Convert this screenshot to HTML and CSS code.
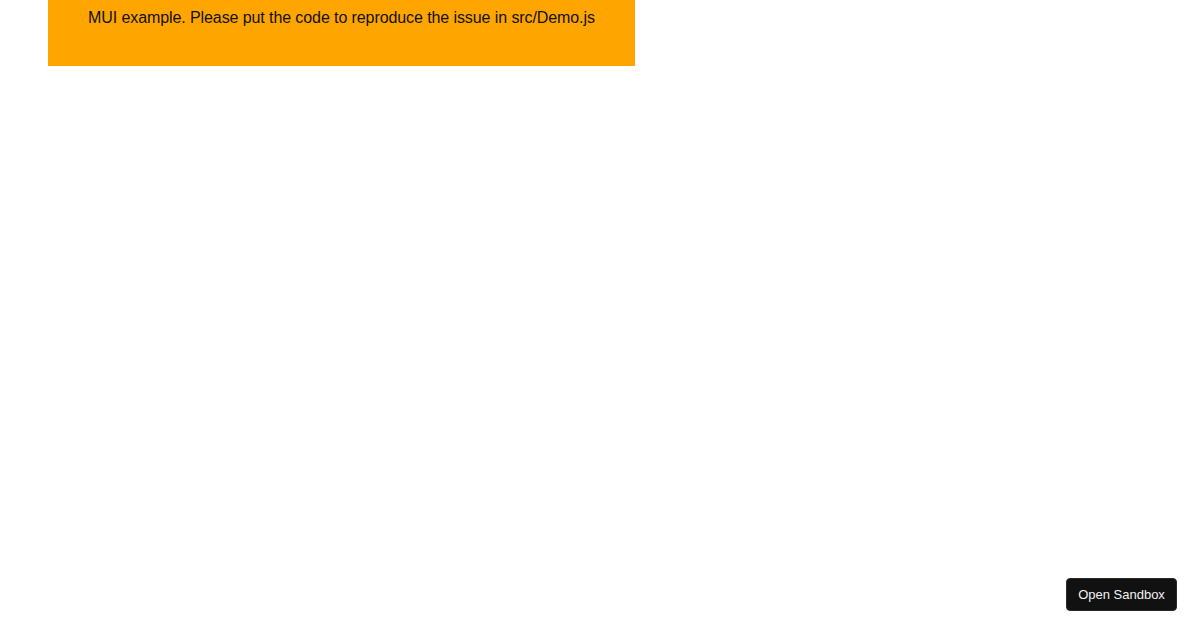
FILE: index.html
```html
<!DOCTYPE html>
<html>
<head>
<meta charset="utf-8">
<link rel="stylesheet" href="styles.css">
</head>
<body>
<div class="banner">MUI example. Please put the code to reproduce the issue in src/Demo.js</div>
<button class="sandbox">Open Sandbox</button>
</body>
</html>
```
FILE: styles.css
```css
html, body {
  margin: 0;
  padding: 0;
  background: #fff;
  font-family: "Liberation Sans", Arial, sans-serif;
}
.banner {
  box-sizing: border-box;
  margin-left: 48px;
  width: 587px;
  height: 66px;
  padding: 9px 30px 0 40px;
  background: #ffa500;
  color: #111;
  font-size: 16px;
  line-height: 18px;
  white-space: nowrap;
  letter-spacing: -0.09px;
}
.sandbox {
  position: fixed;
  right: 23px;
  bottom: 19px;
  width: 111px;
  height: 33px;
  padding: 0;
  border: 1px solid #2a2a2a;
  border-radius: 4px;
  background: #111;
  color: #f2f2f2;
  font-family: "Liberation Sans", Arial, sans-serif;
  font-size: 13px;
}
```
